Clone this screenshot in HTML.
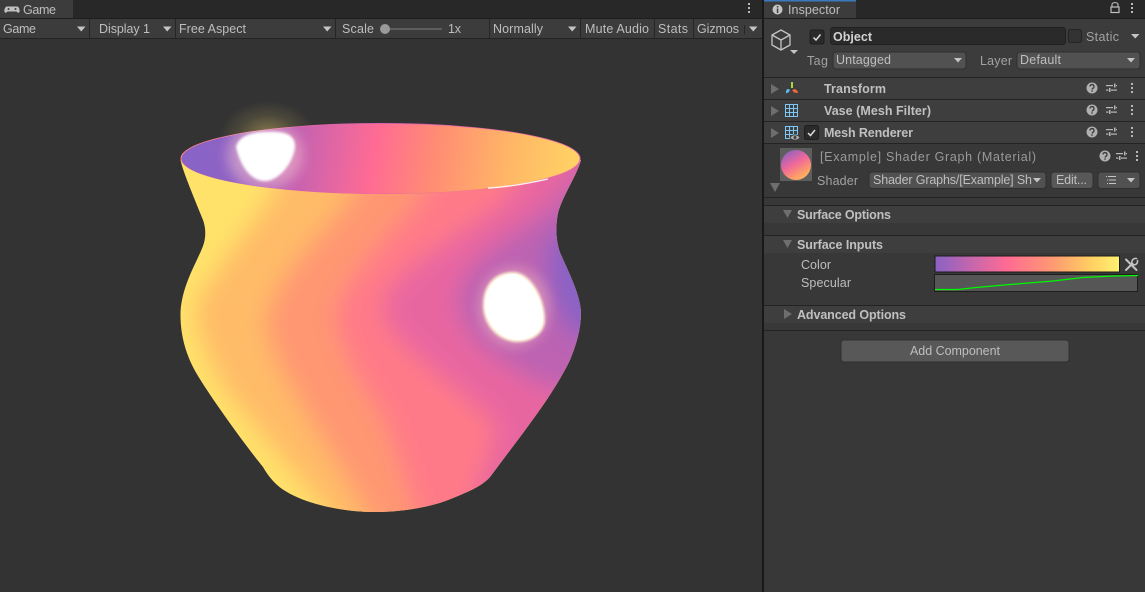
<!DOCTYPE html>
<html>
<head>
<meta charset="utf-8">
<style>
html,body{margin:0;padding:0;background:#333;width:1145px;height:592px;overflow:hidden}
svg{display:block}
text{font-family:"Liberation Sans",sans-serif;font-size:12.5px;fill:#bebebe}
.b{font-weight:bold;fill:#c0c0c0}
.d{fill:#a2a2a2}
</style>
</head>
<body>
<svg width="1145" height="592" viewBox="0 0 1145 592" xmlns="http://www.w3.org/2000/svg">
<defs>
<clipPath id="vase"><path d="M180.500 160 C183 172 195 200 203 220 C206 228 206 238 203 246 C197 262 182 285 180.500 312 C180 335 186 353 193 367 C203 387 245 445 263 467 C268 476 276 486 287 492 C305 503 340 512 375 512 C405 512 435 506 453 498 C470 491 482 486 490 477 L523 433 C540 410 558 385 570 360 C576 345 581 330 581 312 C580 295 570 275 562 257 C556 245 555 228 558 213 C563 195 577 175 581 160 Z"/></clipPath>
<clipPath id="rim"><ellipse cx="380.500" cy="158.500" rx="200" ry="35.500"/></clipPath>
<filter id="bl" filterUnits="userSpaceOnUse" x="60" y="0" width="700" height="640"><feGaussianBlur stdDeviation="12"/></filter>
<filter id="bs" x="-50%" y="-50%" width="200%" height="200%"><feGaussianBlur stdDeviation="1.300"/></filter>
<filter id="bm" x="-80%" y="-80%" width="260%" height="260%"><feGaussianBlur stdDeviation="6"/></filter>
<linearGradient id="inner" gradientUnits="userSpaceOnUse" x1="200" y1="138" x2="575" y2="190">
<stop offset="0" stop-color="#8a63c6"/><stop offset=".1" stop-color="#9062c4"/><stop offset=".27" stop-color="#c862b0"/><stop offset=".46" stop-color="#ff6b94"/><stop offset=".62" stop-color="#ff8c74"/><stop offset=".82" stop-color="#ffb766"/><stop offset="1" stop-color="#ffd364"/>
</linearGradient>
<linearGradient id="rimg" gradientUnits="userSpaceOnUse" x1="180" y1="0" x2="580" y2="0">
<stop offset="0" stop-color="#ff8a80"/><stop offset=".2" stop-color="#f070a0"/><stop offset=".5" stop-color="#d060b0"/><stop offset=".8" stop-color="#e868a0"/><stop offset="1" stop-color="#f070a0"/>
</linearGradient>
<linearGradient id="bar"><stop offset="0" stop-color="#8a62c4"/><stop offset=".39" stop-color="#ff6b94"/><stop offset=".65" stop-color="#ff9c70"/><stop offset=".85" stop-color="#ffd062"/><stop offset="1" stop-color="#fff270"/></linearGradient>
<linearGradient id="sph" x1="0.2" y1="0" x2="0.8" y2="1"><stop offset="0" stop-color="#8a62c4"/><stop offset=".45" stop-color="#f0689a"/><stop offset=".8" stop-color="#ffa066"/><stop offset="1" stop-color="#ffc060"/></linearGradient>
<radialGradient id="glow"><stop offset="0" stop-color="#ffe070" stop-opacity=".42"/><stop offset=".6" stop-color="#ffe070" stop-opacity=".12"/><stop offset="1" stop-color="#ffe070" stop-opacity="0"/></radialGradient>
<g id="help"><circle cx="0" cy="0" r="5.500" fill="#b0b0b0"/><path d="M-2 -1.500 A2 2 0 1 1 0.500 0.500 L0 1.500" fill="none" stroke="#3c3c3c" stroke-width="1.300"/><rect x="-.7" y="2.300" width="1.400" height="1.400" fill="#3c3c3c"/></g>
<g id="sl" fill="#b8b8b8"><rect x="-5" y="-3" width="7" height="1.200"/><rect x="3" y="-4.500" width="1.500" height="4"/><rect x="5" y="-3" width="1" height="1.200"/><rect x="-5" y="1.500" width="2.500" height="1.200"/><rect x="-2" y="0" width="1.500" height="4"/><rect x="0" y="1.500" width="6" height="1.200"/></g>
<g id="dots" fill="#b8b8b8"><rect x="-1" y="-5" width="2" height="2"/><rect x="-1" y="-1" width="2" height="2"/><rect x="-1" y="3" width="2" height="2"/></g>
<g id="chk"><rect x="0" y="0" width="14" height="14" rx="2" fill="#2a2a2a" stroke="#1e1e1e"/><path d="M3.500 7.500 L6 10 L10.500 4.500" fill="none" stroke="#dcdcdc" stroke-width="1.500"/></g>
</defs>

<!-- backgrounds -->
<rect width="1145" height="592" fill="#383838"/>
<rect x="0" y="0" width="762" height="592" fill="#333"/>
<rect x="0" y="0" width="1145" height="18" fill="#282828"/>
<rect x="0" y="18" width="1145" height="1" fill="#1e1e1e"/>
<rect x="0" y="0" width="73" height="18" fill="#3c3c3c"/>
<rect x="0" y="19" width="762" height="19" fill="#3c3c3c"/>
<rect x="0" y="38" width="762" height="1" fill="#232323"/>
<rect x="762" y="0" width="2" height="592" fill="#191919"/>

<!-- vase glow -->
<ellipse cx="268" cy="135" rx="48" ry="34" fill="url(#glow)"/>

<!-- vase body -->
<g clip-path="url(#vase)">
<rect x="170" y="110" width="420" height="410" fill="#ffe26a"/>
<g filter="url(#bl)">
<path d="M310 100 L275 190 C255 225 205 280 195 310 C200 345 215 370 225 390 L325 510 L350 560 L660 560 L660 100 Z" fill="#ffbb67"/>
<path d="M395 100 L355 190 C325 235 275 270 265 325 C275 365 295 395 310 420 L365 510 L385 560 L660 560 L660 100 Z" fill="#ff9772"/>
<path d="M470 100 L425 190 C395 235 340 275 335 320 C345 365 370 395 385 420 L415 510 L430 560 L660 560 L660 100 Z" fill="#ff7a88"/>
<path d="M560 100 L510 195 C460 240 385 270 383 310 C388 345 460 385 497 427 C490 450 480 480 470 510 L455 560 L660 560 L660 100 Z" fill="#e866a0"/>
<path d="M620 120 L560 195 C525 235 455 255 458 305 C462 345 510 365 540 385 L660 410 L660 120 Z" fill="#bc64b2"/>
<path d="M660 215 L555 235 C545 255 540 295 575 335 L660 345 Z" fill="#8a62c4"/>
</g>
</g>

<!-- interior -->
<ellipse cx="380.500" cy="158.500" rx="200" ry="35.500" fill="url(#rimg)"/>
<ellipse cx="380.500" cy="158.800" rx="199" ry="35" fill="url(#inner)"/>
<path d="M488 188 C510 187 530 183 548 179" fill="none" stroke="#fff" stroke-width="1.400" opacity=".9"/>

<!-- highlights -->
<g clip-path="url(#rim)">
<ellipse cx="265" cy="155" rx="38" ry="34" fill="#ffd0d0" opacity=".45" filter="url(#bm)"/>
<path d="M236 147 C238 138 248 133 262 132 C280 131 294 132 295 145 C295 160 280 181 265 181 C250 181 240 165 236 147 Z" fill="#fff" filter="url(#bs)"/>
</g>
<ellipse cx="514" cy="307" rx="36" ry="40" fill="#ffc8c0" opacity=".4" filter="url(#bm)"/>
<path d="M483 305 C483 285 495 272 513 272 C530 272 545 297 545 320 C545 333 532 342 518 342 C498 342 483 325 483 305 Z" fill="#fff6d8" filter="url(#bs)"/>
<path d="M485 305 C485 287 497 274 513 274 C528 274 543 298 543 319 C543 331 531 340 518 340 C500 340 485 323 485 305 Z" fill="#fff"/>

<!-- toolbar separators -->
<g fill="#262626">
<rect x="89" y="19" width="1" height="19"/><rect x="175" y="19" width="1" height="19"/><rect x="335" y="19" width="1" height="19"/><rect x="489" y="19" width="1" height="19"/><rect x="580" y="19" width="1" height="19"/><rect x="654" y="19" width="1" height="19"/><rect x="693" y="19" width="1" height="19"/><rect x="744" y="25" width="1" height="9" />
</g>
<!-- game tab -->
<path d="M7 6.500 H17 C19 6.500 20 10 19.500 12 C19 13 17.500 13 16.500 11.500 H7.500 C6.500 13 5 13 4.500 12 C4 10 5 6.500 7 6.500 Z" fill="#c0c0c0"/>
<circle cx="8.500" cy="9" r="1" fill="#3c3c3c"/><circle cx="15.500" cy="9" r="1" fill="#3c3c3c"/>
<text x="23" y="14" textLength="33" lengthAdjust="spacing">Game</text>
<use href="#dots" x="749" y="8"/>

<!-- toolbar text -->
<text x="3" y="33" textLength="33">Game</text>
<text x="99" y="33" textLength="51">Display 1</text>
<text x="179" y="33" textLength="67">Free Aspect</text>
<text x="342" y="33" textLength="32">Scale</text>
<text x="448" y="33" textLength="13">1x</text>
<text x="493" y="33" textLength="50">Normally</text>
<text x="585" y="33" textLength="64">Mute Audio</text>
<text x="658" y="33" textLength="30">Stats</text>
<text x="697" y="33" textLength="42">Gizmos</text>
<g fill="#c4c4c4">
<path d="M77 26.500 H85.500 L81.200 31.500 Z"/><path d="M163 26.500 H171.500 L167.200 31.500 Z"/><path d="M323 26.500 H331.500 L327.200 31.500 Z"/><path d="M568 26.500 H576.500 L572.200 31.500 Z"/><path d="M749 26.500 H757.500 L753.200 31.500 Z"/>
</g>
<rect x="385" y="28" width="57" height="2" fill="#5e5e5e"/>
<circle cx="385" cy="29" r="5" fill="#999"/>

<!-- inspector tab -->
<rect x="764" y="0" width="92" height="18" fill="#3c3c3c"/>
<rect x="764" y="0" width="92" height="1.500" fill="#3a79bb"/>
<circle cx="777.500" cy="9.500" r="5" fill="#c4c4c4"/>
<rect x="776.800" y="6" width="1.500" height="1.500" fill="#3c3c3c"/><rect x="776.800" y="8.500" width="1.500" height="4.500" fill="#3c3c3c"/>
<text x="788" y="14" textLength="52">Inspector</text>
<path d="M1112 6.500 V4.500 C1112 2 1118 2 1118 4.500 V6.500" fill="none" stroke="#c0c0c0" stroke-width="1.100"/>
<rect x="1111" y="7" width="8" height="5.500" fill="none" stroke="#c0c0c0" stroke-width="1.200"/>
<use href="#dots" x="1132" y="8"/>

<!-- inspector header -->
<rect x="764" y="19" width="381" height="58" fill="#3c3c3c"/>
<g fill="none" stroke="#c4c4c4" stroke-width="1.300" stroke-linejoin="round">
<path d="M781 30 L772 35 V45 L781 50 L790 45 V35 Z"/><path d="M772 35 L781 40 L790 35 M781 40 V50"/>
</g>
<path d="M790 50 H798 L794 54 Z" fill="#c4c4c4"/>
<use href="#chk" x="810" y="30"/>
<rect x="830.500" y="27.500" width="235" height="17" rx="3" fill="#2a2a2a" stroke="#212121"/>
<text x="833" y="41" textLength="39" class="b" style="fill:#d2d2d2">Object</text>
<rect x="1068.500" y="29.500" width="13" height="13" rx="2" fill="#333" stroke="#232323"/>
<text x="1086" y="41" textLength="33" class="d">Static</text>
<path d="M1131 34 H1139.500 L1135.200 38.500 Z" fill="#c4c4c4"/>
<text x="807" y="65" textLength="21" class="d">Tag</text>
<rect x="833" y="52" width="133" height="17" rx="3" fill="#515151" stroke="#303030"/>
<text x="836" y="64" textLength="55">Untagged</text>
<path d="M954 58 H962 L958 62.500 Z" fill="#c4c4c4"/>
<text x="980" y="65" textLength="32" class="d">Layer</text>
<rect x="1017" y="52" width="123" height="17" rx="3" fill="#515151" stroke="#303030"/>
<text x="1020" y="64" textLength="41">Default</text>
<path d="M1127 58 H1135 L1131 62.500 Z" fill="#c4c4c4"/>

<!-- component rows -->
<rect x="764" y="78" width="381" height="65" fill="#3e3e3e"/>
<g fill="#232323">
<rect x="764" y="77" width="381" height="1"/><rect x="764" y="99" width="381" height="1"/><rect x="764" y="121" width="381" height="1"/><rect x="764" y="143" width="381" height="1"/>
</g>
<g fill="#6e6e6e"><path d="M771 84 L779 89 L771 94 Z"/><path d="M771 106 L779 111 L771 116 Z"/><path d="M771 128 L779 133 L771 138 Z"/></g>
<!-- transform icon -->
<rect x="791" y="82" width="2" height="6" fill="#a8d840"/>
<path d="M787 89 L790 89.500 L789 92 L786 93.500 L786 91.500 Z" fill="#5cbcee"/>
<path d="M795 89 L792 90 L794 92.500 L798 93 L797.500 91 Z" fill="#f0683c"/>
<!-- mesh filter icon -->
<g fill="none" stroke="#7cc8f8" stroke-width="1">
<path d="M785.500 104.500 H797.500 V116.500 H785.500 Z M785.500 108.500 H797.500 M785.500 112.500 H797.500 M789.500 104.500 V116.500 M793.500 104.500 V116.500"/>
<path d="M785.500 126.500 H797.500 V138.500 H785.500 Z M785.500 130.500 H797.500 M785.500 134.500 H797.500 M789.500 126.500 V138.500 M793.500 126.500 V138.500"/>
</g>
<path d="M790 137.500 C792 134 798 134 800 137.500 C798 141 792 141 790 137.500 Z" fill="#b0b0b0" stroke="#3e3e3e"/>
<circle cx="795" cy="137.500" r="1.500" fill="#3e3e3e"/>
<use href="#chk" x="804.500" y="125.500"/>
<text x="824" y="93" textLength="62" class="b">Transform</text>
<text x="824" y="115" textLength="107" class="b">Vase (Mesh Filter)</text>
<text x="824" y="137" textLength="89" class="b">Mesh Renderer</text>
<use href="#help" x="1092" y="88"/><use href="#help" x="1092" y="110"/><use href="#help" x="1092" y="132"/>
<use href="#sl" x="1111" y="88"/><use href="#sl" x="1111" y="110"/><use href="#sl" x="1111" y="132"/>
<use href="#dots" x="1132" y="88"/><use href="#dots" x="1132" y="110"/><use href="#dots" x="1132" y="132"/>

<!-- material -->
<rect x="780" y="148" width="32" height="33" fill="#5e5e5e"/>
<circle cx="796" cy="165" r="15" fill="url(#sph)"/>
<text x="820" y="161" textLength="216" class="d" style="fill:#9a9a9a">[Example] Shader Graph (Material)</text>
<use href="#help" x="1105" y="156"/><use href="#sl" x="1121" y="156"/><use href="#dots" x="1137" y="156"/>
<path d="M770 183 H780 L775 192 Z" fill="#6e6e6e"/>
<text x="817" y="185" textLength="41" class="d">Shader</text>
<rect x="869" y="172" width="177" height="16.500" rx="3" fill="#515151" stroke="#303030"/>
<text x="873" y="184" textLength="159">Shader Graphs/[Example] Sh</text>
<path d="M1033 178 H1041 L1037 182.500 Z" fill="#c4c4c4"/>
<rect x="1051" y="172" width="42" height="16.500" rx="3" fill="#585858" stroke="#303030"/>
<text x="1056" y="184" textLength="31">Edit...</text>
<rect x="1098" y="172" width="42" height="16.500" rx="3" fill="#515151" stroke="#303030"/>
<g fill="#c4c4c4"><rect x="1106" y="176" width="1" height="1"/><rect x="1108" y="176" width="8" height="1"/><rect x="1107" y="179.500" width="1" height="1"/><rect x="1109" y="179.500" width="7" height="1"/><rect x="1107" y="183" width="1" height="1"/><rect x="1109" y="183" width="7" height="1"/></g>
<path d="M1127 178 H1135 L1131 182.500 Z" fill="#c4c4c4"/>

<!-- sections -->
<rect x="764" y="197" width="381" height="1" fill="#232323"/>
<rect x="764" y="205" width="381" height="1" fill="#232323"/>
<rect x="764" y="206" width="381" height="17" fill="#3e3e3e"/>
<path d="M783 210 H792 L787.500 218 Z" fill="#6e6e6e"/>
<text x="797" y="219" textLength="94" class="b">Surface Options</text>
<rect x="764" y="235" width="381" height="1" fill="#232323"/>
<rect x="764" y="236" width="381" height="17" fill="#3e3e3e"/>
<path d="M783 240 H792 L787.500 248 Z" fill="#6e6e6e"/>
<text x="797" y="249" textLength="86" class="b">Surface Inputs</text>
<text x="801" y="269" textLength="30">Color</text>
<rect x="934.500" y="255.500" width="185.500" height="17" fill="#1c1c1c"/>
<rect x="935.500" y="256.500" width="183.500" height="15" fill="url(#bar)"/>
<g fill="none" stroke="#c4c4c4" stroke-linecap="round">
<path d="M1126 259.500 L1136.500 270" stroke-width="2"/>
<path d="M1126 270 L1132.500 263.500" stroke-width="2"/>
<path d="M1132 263.500 C1131 260.500 1133.500 258 1136.500 258.500 M1133 264.500 C1135.500 265.500 1138 263.500 1137.500 260.500" stroke-width="1.500"/>
</g>
<text x="801" y="287" textLength="50">Specular</text>
<rect x="934.500" y="274.500" width="203" height="17" fill="#565656" stroke="#1e1e1e"/>
<path d="M935 289.500 H958 L976 287.500 L1010 284.500 L1053 281 L1083 277.500 L1113 276 L1138 275.500" fill="none" stroke="#00f800" stroke-width="1.300"/>
<rect x="764" y="305" width="381" height="1" fill="#232323"/>
<rect x="764" y="306" width="381" height="17" fill="#3e3e3e"/>
<path d="M784 309 L792 314 L784 319 Z" fill="#6e6e6e"/>
<text x="797" y="319" textLength="109" class="b">Advanced Options</text>
<rect x="764" y="330" width="381" height="1" fill="#232323"/>
<rect x="841" y="340" width="228" height="22" rx="3" fill="#585858" stroke="#303030"/>
<text x="910" y="355" textLength="90">Add Component</text>
</svg>
</body>
</html>
